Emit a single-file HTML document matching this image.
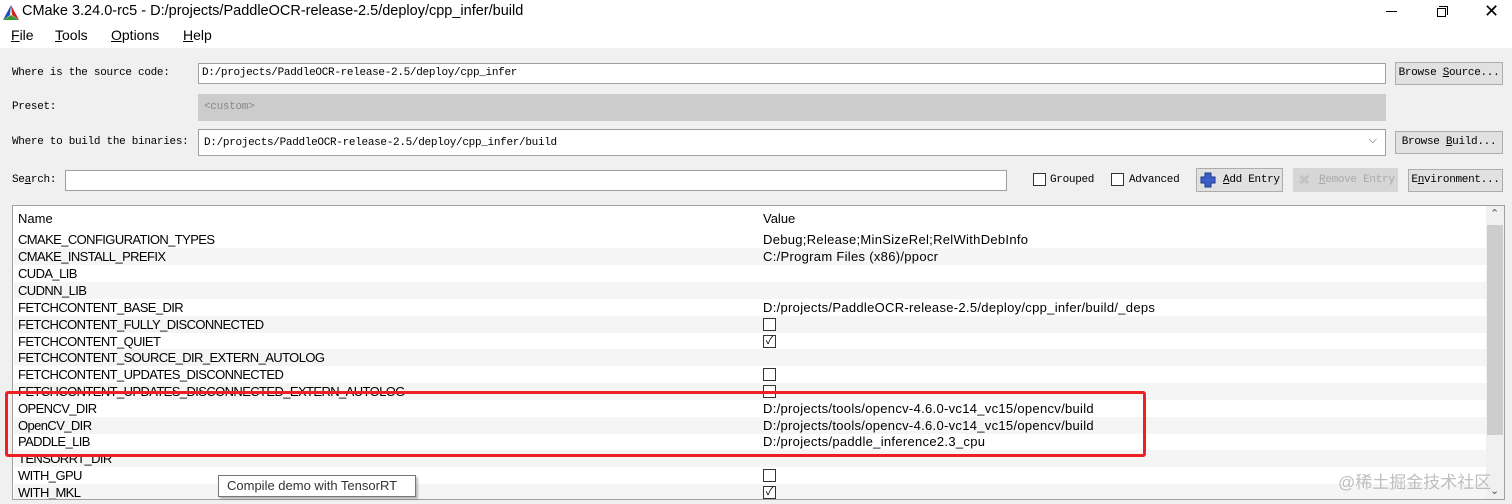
<!DOCTYPE html>
<html><head><meta charset="utf-8"><style>
*{margin:0;padding:0;box-sizing:border-box}
body{width:1512px;height:504px;overflow:hidden;background:#f0f0f0;position:relative;font-family:"Liberation Sans","Noto Sans CJK SC",sans-serif;color:#000}
.a{position:absolute}
.m{font-family:"Liberation Mono","Noto Sans CJK SC",monospace;font-size:11px;letter-spacing:-0.3px;white-space:nowrap}
.inp{position:absolute;background:#fff;border:1px solid #a0a0a0}
.btn{position:absolute;background:#e1e1e1;border:1px solid #adadad;font-family:"Liberation Mono",monospace;font-size:11px;letter-spacing:-0.3px;text-align:center;line-height:20px}
.cb{position:absolute;width:13px;height:13px;border:1px solid #333;background:#fff}
.row{position:absolute;left:14px;width:1472px;height:17px;font-size:13px;line-height:17px;white-space:nowrap}
.row span{position:absolute;top:0}
.n{left:4px;letter-spacing:-0.6px}.v{left:749px;letter-spacing:0.3px}
.ck{position:absolute;left:749px;top:2px;width:13px;height:13px;border:1px solid #333;background:#fff}
</style></head><body>
<div class="a" style="left:0;top:0;width:1512px;height:48px;background:#fff"></div>
<svg class="a" style="left:2px;top:4px" width="18" height="17" viewBox="0 0 18 17"><polygon points="9,1 1,16 8,11" fill="#1f4fb5"/><polygon points="9,1 17,16 10,11" fill="#d02020"/><polygon points="1,16 17,16 9,11" fill="#3a9a3a"/></svg>
<div class="a" style="left:22px;top:3px;font-size:14.5px;color:#000">CMake 3.24.0-rc5 - D:/projects/PaddleOCR-release-2.5/deploy/cpp_infer/build</div>
<div class="a" style="left:1386px;top:11px;width:11px;height:1px;background:#000"></div>
<div class="a" style="left:1437px;top:8px;width:9px;height:9px;border:1px solid #000"></div>
<div class="a" style="left:1439px;top:6px;width:9px;height:9px;border-top:1px solid #000;border-right:1px solid #000"></div>
<div class="a" style="left:1484px;top:1px;font-size:18px;font-weight:300">✕</div>
<div class="a" style="left:11px;top:27px;font-size:14px"><u>F</u>ile</div>
<div class="a" style="left:55px;top:27px;font-size:14px"><u>T</u>ools</div>
<div class="a" style="left:111px;top:27px;font-size:14px"><u>O</u>ptions</div>
<div class="a" style="left:183px;top:27px;font-size:14px"><u>H</u>elp</div>

<div class="a m" style="left:12px;top:67px">Where is the source code:</div>
<div class="inp" style="left:198px;top:63px;width:1188px;height:21px"><span class="m" style="position:absolute;left:3px;top:3px">D:/projects/PaddleOCR-release-2.5/deploy/cpp_infer</span></div>
<div class="btn" style="left:1395px;top:62px;width:108px;height:23px">Browse <u>S</u>ource...</div>
<div class="a m" style="left:12px;top:101px">Preset:</div>
<div class="a" style="left:198px;top:94px;width:1188px;height:27px;background:#cccccc"><span class="m" style="position:absolute;left:6px;top:7px;color:#888">&lt;custom&gt;</span></div>
<div class="a m" style="left:12px;top:136px">Where to build the binaries:</div>
<div class="inp" style="left:198px;top:129px;width:1188px;height:27px"><span class="m" style="position:absolute;left:5px;top:7px">D:/projects/PaddleOCR-release-2.5/deploy/cpp_infer/build</span><span style="position:absolute;right:8px;top:4px;font-size:11px;color:#444">⌵</span></div>
<div class="btn" style="left:1395px;top:131px;width:108px;height:23px">Browse <u>B</u>uild...</div>
<div class="a m" style="left:12px;top:174px">Se<u>a</u>rch:</div>
<div class="inp" style="left:65px;top:170px;width:942px;height:21px"></div>
<div class="cb" style="left:1033px;top:173px"></div><div class="a m" style="left:1050px;top:174px">Grouped</div>
<div class="cb" style="left:1111px;top:173px"></div><div class="a m" style="left:1129px;top:174px">Advanced</div>
<div class="btn" style="left:1196px;top:168px;width:87px;height:24px;line-height:22px;text-align:left;padding-left:26px"><u>A</u>dd Entry</div>
<svg class="a" style="left:1200px;top:172px" width="16" height="16" viewBox="0 0 16 16"><path d="M5 1h6v4h4v6h-4v4H5v-4H1V5h4z" fill="#3c5ec8" stroke="#1e3790"/></svg>
<div class="btn" style="left:1293px;top:168px;width:105px;height:24px;line-height:22px;background:#d6d6d6;border-color:#d6d6d6;color:#aaa;text-align:left;padding-left:25px"><u>R</u>emove Entry</div>
<div class="a" style="left:1298px;top:171px;font-size:15px;color:#c4c4c4">✖</div>
<div class="btn" style="left:1408px;top:169px;width:95px;height:23px">E<u>n</u>vironment...</div>

<div class="a" style="left:12px;top:205px;width:1493px;height:295px;background:#fff;border:1px solid #a0a0a0"></div>
<div class="a" style="left:18px;top:211px;font-size:13px">Name</div>
<div class="a" style="left:763px;top:211px;font-size:13px">Value</div>
<div class="a" style="left:1486px;top:206px;width:18px;height:293px;background:#f0f0f0"></div>
<div class="a" style="left:1487px;top:225px;width:16px;height:210px;background:#cdcdcd"></div>
<div class="a" style="left:1490px;top:207px;font-size:11px;color:#555">⌃</div>
<div class="a" style="left:1490px;top:484px;font-size:11px;color:#555">⌄</div>

<div class="row" style="top:231px"><span class="n">CMAKE_CONFIGURATION_TYPES</span><span class="v">Debug;Release;MinSizeRel;RelWithDebInfo</span></div>
<div class="row" style="top:248px;background:#f5f5f5"><span class="n">CMAKE_INSTALL_PREFIX</span><span class="v">C:/Program Files (x86)/ppocr</span></div>
<div class="row" style="top:265px"><span class="n">CUDA_LIB</span></div>
<div class="row" style="top:282px;background:#f5f5f5"><span class="n">CUDNN_LIB</span></div>
<div class="row" style="top:299px"><span class="n">FETCHCONTENT_BASE_DIR</span><span class="v">D:/projects/PaddleOCR-release-2.5/deploy/cpp_infer/build/_deps</span></div>
<div class="row" style="top:316px;background:#f5f5f5"><span class="n">FETCHCONTENT_FULLY_DISCONNECTED</span><div class="ck"></div></div>
<div class="row" style="top:333px"><span class="n">FETCHCONTENT_QUIET</span><div class="ck" style="font-size:11px;line-height:11px;text-align:center">✓</div></div>
<div class="row" style="top:349px;background:#f5f5f5"><span class="n">FETCHCONTENT_SOURCE_DIR_EXTERN_AUTOLOG</span></div>
<div class="row" style="top:366px"><span class="n">FETCHCONTENT_UPDATES_DISCONNECTED</span><div class="ck"></div></div>
<div class="row" style="top:383px;background:#f5f5f5"><span class="n">FETCHCONTENT_UPDATES_DISCONNECTED_EXTERN_AUTOLOG</span><div class="ck"></div></div>
<div class="row" style="top:400px"><span class="n">OPENCV_DIR</span><span class="v">D:/projects/tools/opencv-4.6.0-vc14_vc15/opencv/build</span></div>
<div class="row" style="top:417px;background:#f5f5f5"><span class="n">OpenCV_DIR</span><span class="v">D:/projects/tools/opencv-4.6.0-vc14_vc15/opencv/build</span></div>
<div class="row" style="top:433px"><span class="n">PADDLE_LIB</span><span class="v">D:/projects/paddle_inference2.3_cpu</span></div>
<div class="row" style="top:450px;background:#f5f5f5"><span class="n">TENSORRT_DIR</span></div>
<div class="row" style="top:467px"><span class="n">WITH_GPU</span><div class="ck"></div></div>
<div class="row" style="top:484px;background:#f5f5f5;height:15px;overflow:hidden"><span class="n">WITH_MKL</span><div class="ck" style="font-size:11px;line-height:11px;text-align:center">✓</div></div>

<div class="a" style="left:5px;top:391px;width:1141px;height:66px;border:3px solid #ee2020;border-radius:3px"></div>
<div class="a" style="left:218px;top:475px;width:198px;height:22px;background:#fff;border:1px solid #767676;box-shadow:2px 2px 2px rgba(0,0,0,.25);font-size:13px;line-height:20px;padding-left:8px;color:#333">Compile demo with TensorRT</div>
<div class="a" style="left:1338px;top:468px;font-size:17px;color:rgba(170,170,170,.75)">@稀土掘金技术社区</div>
</body></html>
